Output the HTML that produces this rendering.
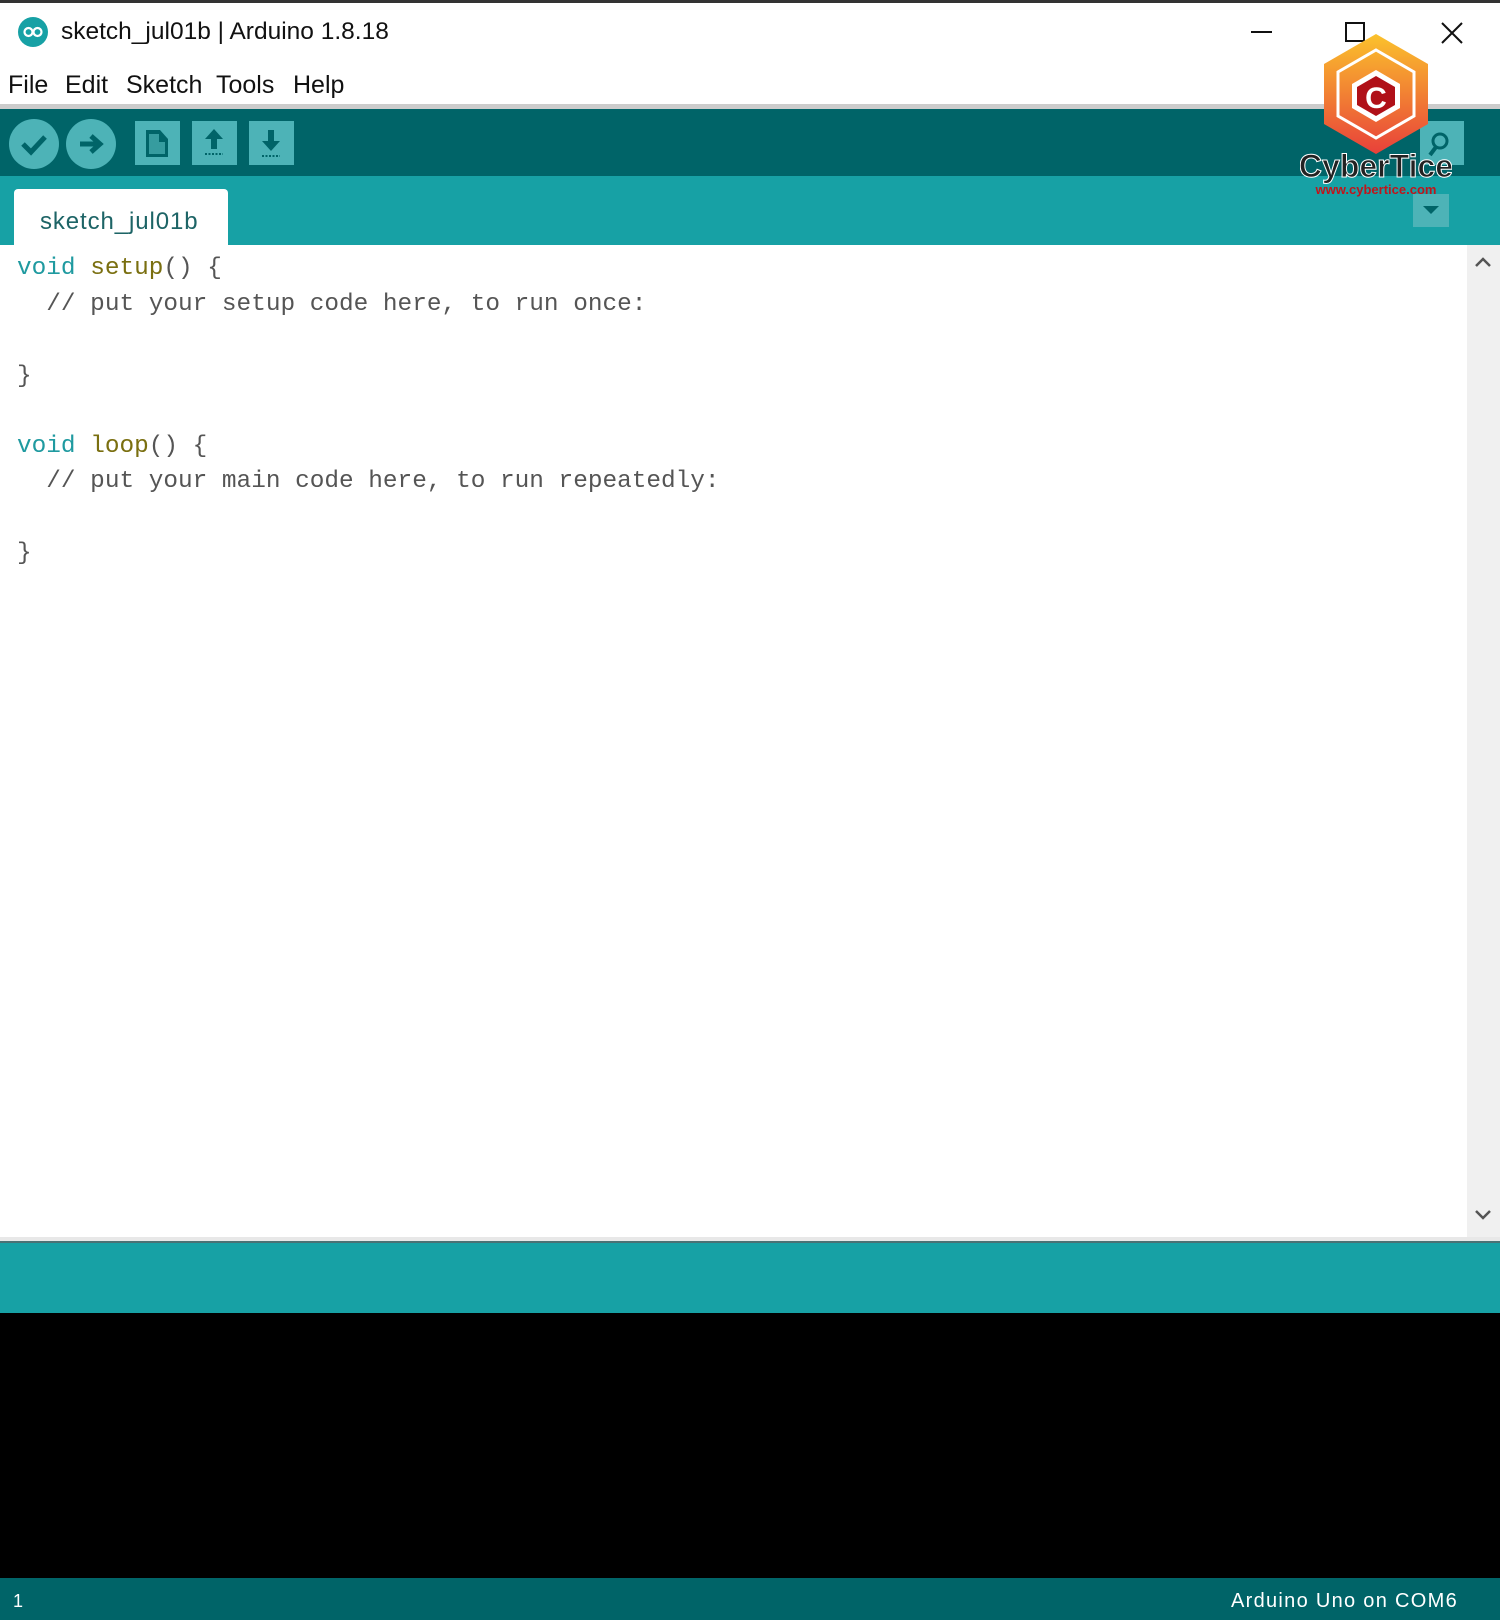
<!DOCTYPE html>
<html><head><style>
*{margin:0;padding:0;box-sizing:border-box}
body{width:1500px;height:1620px;position:relative;overflow:hidden;background:#fff;font-family:"Liberation Sans",sans-serif}
.a{position:absolute}
.code{font-family:"Liberation Mono",monospace;font-size:24.4px;color:#555;white-space:pre;left:17px}
.k{color:#1f9aa0}.f{color:#7a6f10}
.btn{background:#4db3b7;width:45px;height:44px}
.m{position:absolute;top:71px;font-size:25px;color:#111}
</style></head><body>
<div class="a" style="left:0;top:0;width:1500px;height:3px;background:#333"></div>
<svg class="a" style="left:17px;top:16px" width="32" height="32" viewBox="0 0 32 32"><circle cx="16" cy="16" r="15" fill="#17a1a5"/><circle cx="11.5" cy="16" r="4" fill="none" stroke="#fff" stroke-width="2.2"/><circle cx="20.5" cy="16" r="4" fill="none" stroke="#fff" stroke-width="2.2"/></svg>
<div class="a" style="left:61px;top:18px;font-size:24.5px;color:#111">sketch_jul01b | Arduino 1.8.18</div>
<div class="a" style="left:1251px;top:31px;width:21px;height:2px;background:#111"></div>
<div class="a" style="left:1345px;top:22px;width:20px;height:20px;border:2px solid #111"></div>
<svg class="a" style="left:1440px;top:21px" width="24" height="24"><path d="M2 2L22 22M22 2L2 22" stroke="#111" stroke-width="2"/></svg>
<div class="m" style="left:8px">File</div>
<div class="m" style="left:65px">Edit</div>
<div class="m" style="left:126px">Sketch</div>
<div class="m" style="left:216px">Tools</div>
<div class="m" style="left:293px">Help</div>
<div class="a" style="left:0;top:104px;width:1500px;height:5px;background:#ccc"></div>
<div class="a" style="left:0;top:109px;width:1500px;height:67px;background:#006468"></div>
<svg class="a" style="left:9px;top:119px" width="300" height="50">
<circle cx="25" cy="25" r="25" fill="#4db3b7"/><path d="M14 25l8 8 14-15" stroke="#006468" stroke-width="5" fill="none"/>
<circle cx="82" cy="25" r="25" fill="#4db3b7"/><path d="M71 25h18M82 17l9 8-9 8" stroke="#006468" stroke-width="5" fill="none"/>
</svg>
<div class="a btn" style="left:135px;top:121px"></div>
<div class="a btn" style="left:192px;top:121px"></div>
<div class="a btn" style="left:249px;top:121px"></div>
<svg class="a" style="left:135px;top:121px" width="160" height="44">
<path d="M11 9h14l8 9v18H11z" fill="#006468"/><path d="M14 13h10v8h6v12H14z" fill="#4db3b7" opacity=".7"/>
<path d="M79 8l-9 10h6v10h6V18h6z" fill="#006468"/><path d="M70 33h18" stroke="#006468" stroke-width="2" stroke-dasharray="2 1.5"/>
<path d="M136 30l-9-10h6V9h6v11h6z" fill="#006468"/><path d="M127 35h18" stroke="#006468" stroke-width="2" stroke-dasharray="2 1.5"/>
</svg>
<div class="a btn" style="left:1420px;top:121px;width:44px"></div>
<svg class="a" style="left:1420px;top:121px" width="44" height="44"><circle cx="20" cy="20" r="7" fill="none" stroke="#006468" stroke-width="3"/><path d="M16 26l-6 8" stroke="#006468" stroke-width="4"/></svg>
<div class="a" style="left:0;top:176px;width:1500px;height:69px;background:#17a1a5"></div>
<div class="a" style="left:14px;top:189px;width:214px;height:56px;background:#fff;border-radius:4px 4px 0 0"></div>
<div class="a" style="left:40px;top:208px;font-size:24px;letter-spacing:0.9px;color:#1d6466">sketch_jul01b</div>
<div class="a" style="left:1413px;top:194px;width:36px;height:33px;background:#4db3b7"></div>
<svg class="a" style="left:1413px;top:194px" width="36" height="33"><path d="M10 12h16l-8 8z" fill="#006468"/></svg>
<svg class="a" style="left:1300px;top:32px" width="152" height="170" viewBox="0 0 152 170">
<defs><linearGradient id="g" x1="0" y1="0" x2="0" y2="1"><stop offset="0" stop-color="#fbc22c"/><stop offset="1" stop-color="#e8403a"/></linearGradient></defs>
<path d="M76 2L128 32V92L76 122L24 92V32Z" fill="url(#g)"/>
<path d="M76 18L114 40V84L76 106L38 84V40Z" fill="none" stroke="#fff" stroke-width="3"/>
<path d="M76 38L100 52V76L76 90L52 76V52Z" fill="#fff"/>
<path d="M76 44L95 55V73L76 84L57 73V55Z" fill="#b01018"/>
<text x="76" y="76" font-family="Liberation Sans" font-weight="bold" font-size="30" fill="#fff" text-anchor="middle">C</text>
<text x="76" y="145" font-family="Liberation Sans" font-weight="bold" font-size="32" fill="#222" stroke="#fff" stroke-width="1" text-anchor="middle">CyberTice</text>
<text x="76" y="162" font-family="Liberation Sans" font-weight="bold" font-size="13" fill="#c0151b" text-anchor="middle">www.cybertice.com</text>
</svg>
<div class="a code" style="top:255px"><span class="k">void</span> <span class="f">setup</span>() {</div>
<div class="a code" style="top:291px">  // put your setup code here, to run once:</div>
<div class="a code" style="top:363px">}</div>
<div class="a code" style="top:433px"><span class="k">void</span> <span class="f">loop</span>() {</div>
<div class="a code" style="top:468px">  // put your main code here, to run repeatedly:</div>
<div class="a code" style="top:540px">}</div>
<div class="a" style="left:1467px;top:245px;width:33px;height:992px;background:#f0f0f0"></div>
<svg class="a" style="left:1472px;top:255px" width="22" height="14"><path d="M4 11l7-7 7 7" stroke="#555" stroke-width="2.5" fill="none"/></svg>
<svg class="a" style="left:1472px;top:1208px" width="22" height="14"><path d="M4 3l7 7 7-7" stroke="#555" stroke-width="2.5" fill="none"/></svg>
<div class="a" style="left:0;top:1237px;width:1500px;height:4px;background:#e8e8e8"></div>
<div class="a" style="left:0;top:1241px;width:1500px;height:2px;background:#4a7275"></div>
<div class="a" style="left:0;top:1243px;width:1500px;height:70px;background:#17a1a5"></div>
<div class="a" style="left:0;top:1313px;width:1500px;height:265px;background:#000"></div>
<div class="a" style="left:0;top:1578px;width:1500px;height:42px;background:#006468"></div>
<div class="a" style="left:13px;top:1591px;font-size:18px;color:#fff">1</div>
<div class="a" style="right:42px;top:1590px;font-size:20px;letter-spacing:1.3px;color:#fff">Arduino Uno on COM6</div>
</body></html>
